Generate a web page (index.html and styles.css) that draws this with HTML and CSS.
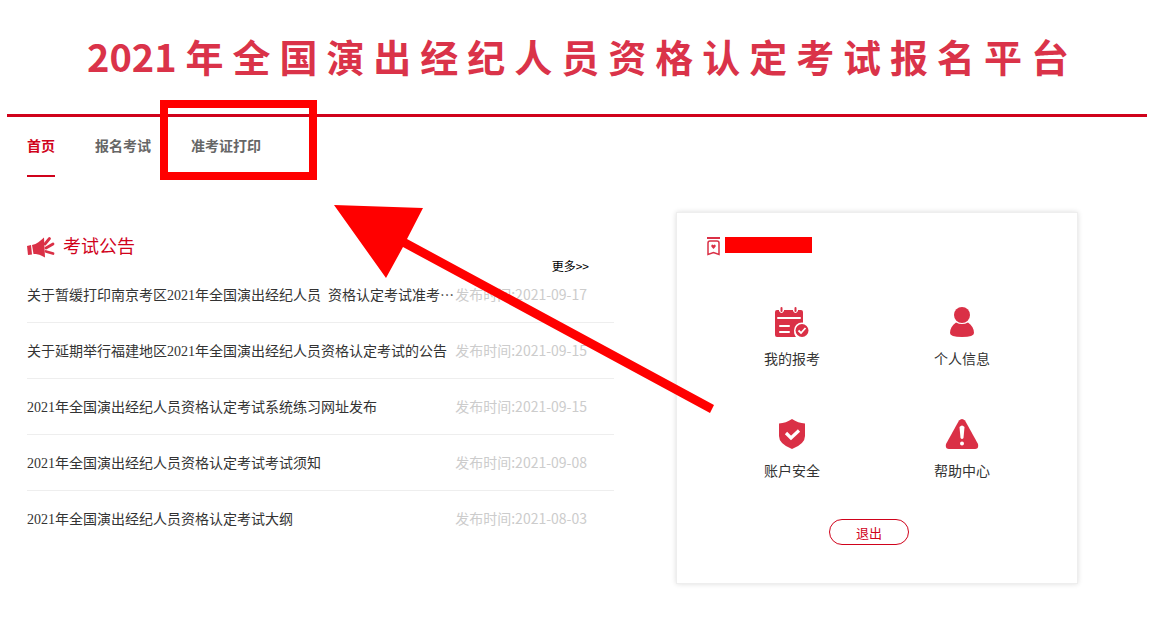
FILE: index.html
```html
<!DOCTYPE html>
<html lang="zh-CN">
<head>
  <meta charset="utf-8">
  <title>2021年全国演出经纪人员资格认定考试报名平台</title>
  <link rel="stylesheet" href="styles.css">
</head>
<body>
  <header class="header">
    <h1>2021 年 全 国 演 出 经 纪 人 员 资 格 认 定 考 试 报 名 平 台</h1>
  </header>

  <nav class="nav">
    <a href="#" class="active">首页</a>
    <a href="#">报名考试</a>
    <a href="#" class="marked">准考证打印</a>
  </nav>

  <div class="main">
    <div class="notice">
      <div class="notice-head">
        <h2>
          <svg width="28" height="22" viewBox="0 0 28 22" fill="#da3046">
            <path d="M0 10 L4 9 L5 18.500 L1 19 Z"/>
            <path d="M5 9 C10 8 13 5 17 1.500 L18 21.500 C14 19 11 18 6.500 18 Z"/>
            <path d="M18 8 L22.500 2.500 M19 12 L26 8 M19 15.500 L26 17.500" stroke="#da3046" stroke-width="2.800" stroke-linecap="round"/>
          </svg>
          <span>考试公告</span>
        </h2>
        <a href="#" class="more">更多&gt;&gt;</a>
      </div>
      <ul class="list">
        <li><a href="#">关于暂缓打印南京考区2021年全国演出经纪人员&nbsp;&nbsp;资格认定考试准考⋯</a><span class="date">发布时间:2021-09-17</span></li>
        <li><a href="#">关于延期举行福建地区2021年全国演出经纪人员资格认定考试的公告</a><span class="date">发布时间:2021-09-15</span></li>
        <li><a href="#">2021年全国演出经纪人员资格认定考试系统练习网址发布</a><span class="date">发布时间:2021-09-15</span></li>
        <li><a href="#">2021年全国演出经纪人员资格认定考试考试须知</a><span class="date">发布时间:2021-09-08</span></li>
        <li><a href="#">2021年全国演出经纪人员资格认定考试大纲</a><span class="date">发布时间:2021-08-03</span></li>
      </ul>
    </div>

    <div class="user">
      <div class="user-name">
        <svg width="13" height="19" viewBox="0 0 13 19" fill="none" stroke="#da3046">
          <path d="M0 1 H13" stroke-width="2"/>
          <path d="M1 17 V6 Q1 4 3 4 H10 Q12 4 12 6 V17.500 L6.500 15.500 L1 17.500 Z" stroke-width="1.500"/>
          <path d="M6.500 12 L4.300 9.500 Q4 7.500 5.500 7.500 L6.500 8.200 L7.500 7.500 Q9 7.500 8.700 9.500 Z" fill="#da3046" stroke="none"/>
        </svg>
        <span class="mask"></span>
      </div>

      <div class="menu">
        <a href="#">
          <svg width="34" height="30" viewBox="0 0 34 30" fill="#da3046">
            <path d="M2 3 H26 Q28 3 28 5 V18 A7.500 7.500 0 0 0 21 30 H2 Q0 30 0 28 V5 Q0 3 2 3 Z"/>
            <path d="M4 0 H9 V4 Q6.500 8 4 4 Z M18 0 H23 V4 Q20.500 8 18 4 Z" fill="#fff"/>
            <path d="M6.500 1 V4 M20.500 1 V4" stroke="#da3046" stroke-width="2" stroke-linecap="round"/>
            <path d="M3 11 H25 M5 19 H14 M5 25 H14" stroke="#fff" stroke-width="2" stroke-linecap="round"/>
            <circle cx="27" cy="23.500" r="8" fill="#fff"/>
            <circle cx="27" cy="23.500" r="6.500"/>
            <path d="M23.500 23.500 L26 26 L30.500 21" fill="none" stroke="#fff" stroke-width="1.800"/>
          </svg>
          <span>我的报考</span>
        </a>
        <a href="#">
          <svg width="24" height="30" viewBox="0 0 24 30" fill="#da3046">
            <circle cx="12" cy="8" r="8"/>
            <path d="M6 15.500 Q12 18.500 18 15.500 C22 18 24 22 24 26 Q24 30 12 30 Q0 30 0 26 C0 22 2 18 6 15.500 Z"/>
          </svg>
          <span>个人信息</span>
        </a>
        <a href="#">
          <svg width="26" height="30" viewBox="0 0 26 30" fill="#da3046">
            <path d="M13 0 Q19 4 26 4.500 V17 Q26 25 13 30 Q0 25 0 17 V4.500 Q7 4 13 0 Z"/>
            <path d="M7 14 L12 19 L20 11.500" fill="none" stroke="#fff" stroke-width="3.200"/>
          </svg>
          <span>账户安全</span>
        </a>
        <a href="#">
          <svg width="34" height="30" viewBox="0 0 34 30" fill="#da3046">
            <path d="M14 1.500 Q17 -1.500 20 1.500 L33 25 Q34 30 30 30 H4 Q0 30 1 25 Z"/>
            <path d="M14.500 8 Q17 5 19.500 8 L18.500 19 Q17 21 15.500 19 Z" fill="#fff"/>
            <circle cx="17" cy="24.500" r="2" fill="#fff"/>
          </svg>
          <span>帮助中心</span>
        </a>
      </div>

      <button type="button" class="logout">退出</button>
    </div>
  </div>

  <!-- arrow pointing at the print entry -->
  <svg class="arrow" width="380" height="210" viewBox="0 0 380 210" fill="#f00">
    <path d="M0 0 L89 3 L73 34 L380 200 L376 208 L69 42 L52 73 Z"/>
  </svg>
</body>
</html>
```

FILE: styles.css
```css
* {
  box-sizing: border-box;
}

body {
  position: relative;
  margin: 0 10px 0 7px;
  font-family: "Liberation Serif", "Noto Sans CJK SC", sans-serif;
  font-size: 14px;
  line-height: 20px;
  color: #333;
  background-color: #fff;
}

a {
  color: #333;
  text-decoration: none;
}

h1, h2, ul {
  margin: 0;
  padding: 0;
}

svg {
  display: block;
}

.header {
  padding: 26px 78px 28px 80px;
  border-bottom: 3px solid #d0021b;
}

.header h1 {
  font-family: "Noto Sans CJK SC", sans-serif;
  font-size: 38px;
  line-height: 60px;
  color: #da3349;
  white-space: nowrap;
  text-align-last: justify;
}

.nav {
  display: flex;
  gap: 40px;
  padding: 0 20px;
}

.nav a {
  position: relative;
  padding: 20px 0 18px;
  border-bottom: 2px solid transparent;
  font-weight: bold;
  color: #666;
}

.nav .active {
  color: #d0021b;
  border-color: #d0021b;
}

.nav .marked::after {
  content: "";
  position: absolute;
  box-sizing: border-box;
  top: -17px;
  left: -31px;
  width: 157px;
  height: 80px;
  border: 8px solid #f00;
}

.main {
  display: flex;
  align-items: flex-start;
  gap: 62px;
  padding: 35px 69px 40px 20px;
}

.notice {
  flex: 1;
  padding-top: 22px;
}

.notice-head {
  display: flex;
  justify-content: space-between;
  align-items: flex-end;
  padding-right: 25px;
  margin-bottom: 8px;
}

.notice-head h2 {
  display: flex;
  align-items: center;
  gap: 8px;
  padding-bottom: 16px;
  font-size: 18px;
  line-height: 26px;
  font-weight: normal;
  color: #d0021b;
}

.more {
  font-family: "Noto Sans CJK SC", sans-serif;
  font-size: 12px;
  color: #000;
}

.list {
  list-style: none;
}

.list li {
  display: flex;
  justify-content: space-between;
  align-items: baseline;
  height: 39px;
  padding-right: 27px;
  margin-bottom: 17px;
  border-bottom: 1px solid #eee;
  white-space: nowrap;
}

.list li:last-child {
  border-bottom: none;
}

.date {
  font-family: "Noto Sans CJK SC", sans-serif;
  color: #ccc;
}

.user {
  width: 402px;
  padding: 24px 30px 38px;
  border: 1px solid #eee;
  box-shadow: 0 0 5px #ddd;
}

.user-name {
  display: flex;
  gap: 5px;
}

.mask {
  width: 87px;
  height: 16px;
  background-color: #f00;
}

.menu {
  display: grid;
  grid-template-columns: 1fr 1fr;
  row-gap: 49px;
  padding-top: 51px;
}

.menu a {
  display: flex;
  flex-direction: column;
  align-items: center;
  gap: 13px;
}

.logout {
  display: block;
  width: 80px;
  height: 26px;
  margin: 37px 0 0 122px;
  padding: 0;
  border: 1px solid #d0021b;
  border-radius: 13px;
  background-color: #fff;
  font-family: "Noto Sans CJK SC", sans-serif;
  font-size: 13px;
  color: #d0021b;
  cursor: pointer;
}

.arrow {
  position: absolute;
  top: 205px;
  left: 327px;
}
```
